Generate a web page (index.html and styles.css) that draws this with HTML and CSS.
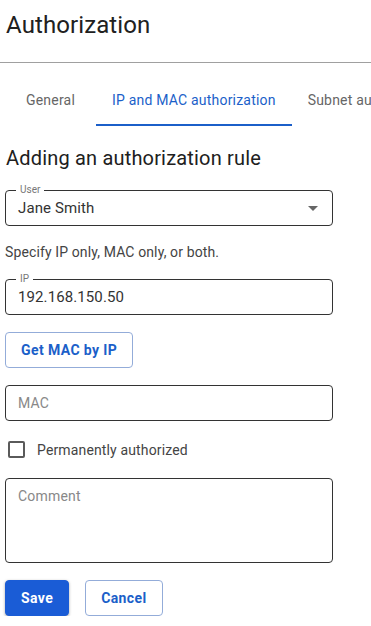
FILE: index.html
```html
<!DOCTYPE html>
<html lang="en">
<head>
  <meta charset="UTF-8" />
  <meta name="viewport" content="width=device-width, initial-scale=1.0" />
  <title>Authorization</title>
  <link rel="stylesheet" href="styles.css">
</head>
<body>
  <div class="header">
    <h1 class="title">Authorization</h1>
  </div>
  <div class="tabs">
    <div class="tab">General</div>
    <div class="tab active">IP and MAC authorization</div>
    <div class="tab">Subnet authorization</div>
  </div>
  <div class="form">
    <h2 class="form-title">Adding an authorization rule</h2>
    <div class="field select">
      <span class="field-label">User</span>
      <span class="field-value">Jane Smith</span>
      <svg class="arrow" width="10" height="5" viewBox="0 0 10 5"><path d="M0 0h10L5 5z" fill="#666"/></svg>
    </div>
    <p class="hint">Specify IP only, MAC only, or both.</p>
    <div class="field">
      <span class="field-label">IP</span>
      <span class="field-value">192.168.150.50</span>
    </div>
    <div class="row">
      <button class="btn btn-outline">Get MAC by IP</button>
    </div>
    <div class="field">
      <span class="placeholder">MAC</span>
    </div>
    <label class="check">
      <span class="checkbox"></span>
      <span class="check-label">Permanently authorized</span>
    </label>
    <div class="field textarea">
      <span class="placeholder">Comment</span>
    </div>
    <div class="row actions">
      <button class="btn btn-primary">Save</button>
      <button class="btn btn-outline">Cancel</button>
    </div>
  </div>
</body>
</html>
```

FILE: styles.css
```css
body {
  font-family: Roboto, "Liberation Sans", sans-serif;
  margin: 0;
  padding: 0;
  background: #fff;
  color: #222;
  overflow: hidden;
}
.header {
  padding: 11px 6px 23px;
  border-bottom: 1px solid #a0a0a0;
}
.title {
  margin: 0;
  font-size: 24px;
  line-height: 28px;
  font-weight: 400;
  color: #202020;
  letter-spacing: 0.1px;
}
.tabs {
  display: flex;
  margin-top: 14px;
  padding-left: 10px;
  white-space: nowrap;
  overflow: hidden;
}
.tab {
  height: 47px;
  line-height: 47px;
  padding: 0 16px;
  font-size: 14px;
  letter-spacing: 0.2px;
  color: #666;
  border-bottom: 2px solid transparent;
  flex-shrink: 0;
}
.tab.active {
  color: #1b5fc9;
  border-bottom-color: #1b5fc9;
  margin-left: 5px;
}
.form {
  width: 328px;
  padding-left: 5px;
}
.form-title {
  margin: 20px 0 0 1px;
  font-size: 20px;
  line-height: 24px;
  font-weight: 400;
  letter-spacing: 0.18px;
  color: #202020;
}
.field {
  position: relative;
  box-sizing: border-box;
  height: 36px;
  border: 1px solid #333;
  border-radius: 4px;
  display: flex;
  align-items: center;
  padding: 0 12px;
  font-size: 15px;
  margin-top: 17px;
}
.select {
  margin-top: 20px;
}
.field-label {
  position: absolute;
  top: -7px;
  left: 10px;
  padding: 0 4px;
  background: #fff;
  font-size: 10px;
  line-height: 12px;
  color: #777;
}
.field-value {
  flex: 1;
  color: #333;
  letter-spacing: 0.1px;
}
.placeholder {
  color: #888;
  font-size: 14px;
  letter-spacing: 0.2px;
}
.arrow {
  margin-right: 2px;
}
.hint {
  margin: 16px 0 0;
  font-size: 14px;
  line-height: 20px;
  letter-spacing: 0.12px;
  color: #444;
}
.row {
  display: flex;
  gap: 16px;
  margin-top: 17px;
}
.btn {
  height: 36px;
  padding: 0 15px;
  font-family: inherit;
  font-size: 14px;
  font-weight: 700;
  letter-spacing: 0.4px;
  border-radius: 4px;
  background: #fff;
  cursor: pointer;
}
.btn-outline {
  color: #1b5fc9;
  border: 1px solid #93acd9;
}
.btn-primary {
  color: #fff;
  background: #1a5cd6;
  border: 1px solid #1a5cd6;
  box-shadow: 0 1px 3px rgba(0, 0, 0, 0.35);
}
.check {
  display: flex;
  align-items: center;
  height: 17px;
  margin-top: 20px;
  padding-left: 3px;
}
.checkbox {
  box-sizing: border-box;
  width: 17px;
  height: 17px;
  border: 2px solid #5a5a5a;
  border-radius: 2px;
}
.check-label {
  margin-left: 12px;
  font-size: 14px;
  letter-spacing: 0.14px;
  color: #444;
}
.textarea {
  height: 85px;
  align-items: flex-start;
  padding-top: 9px;
  margin-top: 20px;
}
```
